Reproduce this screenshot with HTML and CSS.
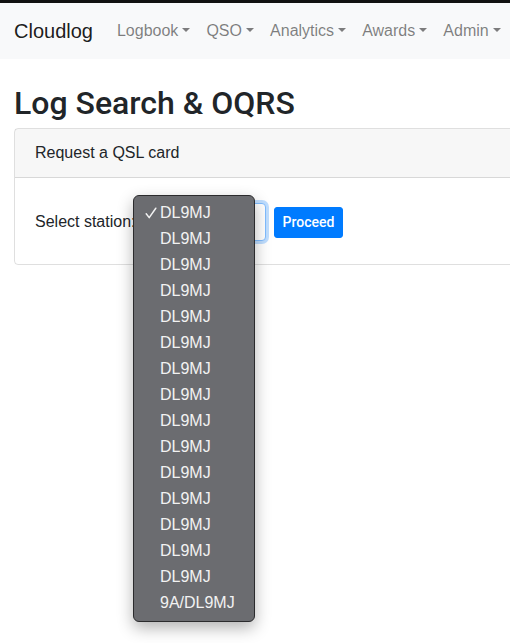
FILE: index.html
```html
<!DOCTYPE html>
<html lang="en">
<head>
    <meta charset="UTF-8">
    <meta name="viewport" content="width=device-width, initial-scale=1.0">
    <title>Cloudlog - Log Search &amp; OQRS</title>
    <link rel="stylesheet" href="styles.css">
</head>
<body>
    <div class="top-strip"></div>

    <nav class="navbar">
        <a class="navbar-brand" href="#">Cloudlog</a>
        <ul class="nav">
            <li><a class="nav-link dropdown-toggle" href="#">Logbook</a></li>
            <li><a class="nav-link dropdown-toggle" href="#">QSO</a></li>
            <li><a class="nav-link dropdown-toggle" href="#">Analytics</a></li>
            <li><a class="nav-link dropdown-toggle" href="#">Awards</a></li>
            <li><a class="nav-link dropdown-toggle" href="#">Admin</a></li>
        </ul>
    </nav>

    <div class="container">
        <h2>Log Search &amp; OQRS</h2>

        <div class="card">
            <div class="card-header">Request a QSL card</div>
            <div class="card-body">
                <form class="form-inline">
                    <label for="station">Select station:</label>
                    <select id="station" class="form-control">
                        <option>DL9MJ</option>
                    </select>
                    <button type="button" class="btn-primary">Proceed</button>

                    <!-- open option list of the station select -->
                    <ul class="select-popup">
                        <li class="selected"><svg class="check" viewBox="0 0 12 12" width="12" height="12"><polyline points="1.2,6.8 4.2,10.6 10.8,1.2" fill="none" stroke="#f2f2f2" stroke-width="1.5" stroke-linecap="round" stroke-linejoin="round"/></svg>DL9MJ</li>
                        <li>DL9MJ</li>
                        <li>DL9MJ</li>
                        <li>DL9MJ</li>
                        <li>DL9MJ</li>
                        <li>DL9MJ</li>
                        <li>DL9MJ</li>
                        <li>DL9MJ</li>
                        <li>DL9MJ</li>
                        <li>DL9MJ</li>
                        <li>DL9MJ</li>
                        <li>DL9MJ</li>
                        <li>DL9MJ</li>
                        <li>DL9MJ</li>
                        <li>DL9MJ</li>
                        <li>9A/DL9MJ</li>
                    </ul>
                </form>
            </div>
        </div>
    </div>
</body>
</html>
```

FILE: styles.css
```css
html {
    overflow: hidden;
}

body {
    margin: 0;
    min-height: 643px;
    font-family: "Liberation Sans", Arial, sans-serif;
    font-size: 16px;
    line-height: 1.5;
    color: #212529;
    background: #fff;
}

.top-strip {
    height: 3px;
    background: #111;
}

.navbar {
    display: flex;
    align-items: center;
    padding: 8px 16px 8px 14px;
    background-color: #f8f9fa;
    white-space: nowrap;
}

.navbar-brand {
    font-size: 20px;
    line-height: 30px;
    padding: 5px 0;
    margin-right: 16px;
    color: rgba(0,0,0,.9);
    text-decoration: none;
}

.nav {
    display: flex;
    list-style: none;
    margin: 0;
    padding: 0;
}

.nav-link {
    display: block;
    padding: 8px;
    color: rgba(0,0,0,.5);
    text-decoration: none;
}

.dropdown-toggle::after {
    display: inline-block;
    margin-left: .255em;
    vertical-align: .255em;
    content: "";
    border-top: .3em solid;
    border-right: .3em solid transparent;
    border-left: .3em solid transparent;
}

.container {
    width: 1110px;
    padding: 0 14px;
}

h2 {
    font-family: Roboto, "Liberation Sans", sans-serif;
    font-size: 32px;
    font-weight: 500;
    line-height: 1.2;
    margin: 25px 0 6px;
}

.card {
    border: 1px solid rgba(0,0,0,.125);
    border-radius: 4px;
}

.card-header {
    padding: 12px 20px;
    background-color: rgba(0,0,0,.03);
    border-bottom: 1px solid rgba(0,0,0,.125);
}

.card-body {
    padding: 20px;
}

.form-inline {
    position: relative;
    display: flex;
    align-items: center;
    padding: 5px 0 3px;
}

.form-inline label {
    margin-right: 8px;
}

.form-control {
    -webkit-appearance: none;
    appearance: none;
    width: 122px;
    height: 38px;
    padding: 6px 12px;
    font: inherit;
    color: #495057;
    background: #fff;
    border: 1px solid #80bdff;
    border-radius: 4px;
    box-shadow: 0 0 0 3px rgba(0,123,255,.25);
    outline: 0;
}

.btn-primary {
    margin-left: 8px;
    height: 31px;
    padding: 4px 8px;
    font-family: Roboto, "Liberation Sans", sans-serif;
    font-size: 14px;
    font-weight: 500;
    color: #fff;
    background-color: #007bff;
    border: 1px solid #007bff;
    border-radius: 3px;
}

/* native-looking option list */
.select-popup {
    position: absolute;
    left: 98px;
    top: -3px;
    width: 120px;
    margin: 0;
    padding: 4px 0 5px;
    list-style: none;
    background: #6b6c70;
    border: 1px solid #2b2b2d;
    border-radius: 6px;
    box-shadow: 0 6px 16px rgba(0,0,0,.3);
}

.select-popup li {
    height: 26px;
    line-height: 26px;
    padding-left: 26px;
    color: #f2f2f2;
    font-size: 16px;
    position: relative;
}

.select-popup .check {
    position: absolute;
    left: 11px;
    top: 7px;
}
```
